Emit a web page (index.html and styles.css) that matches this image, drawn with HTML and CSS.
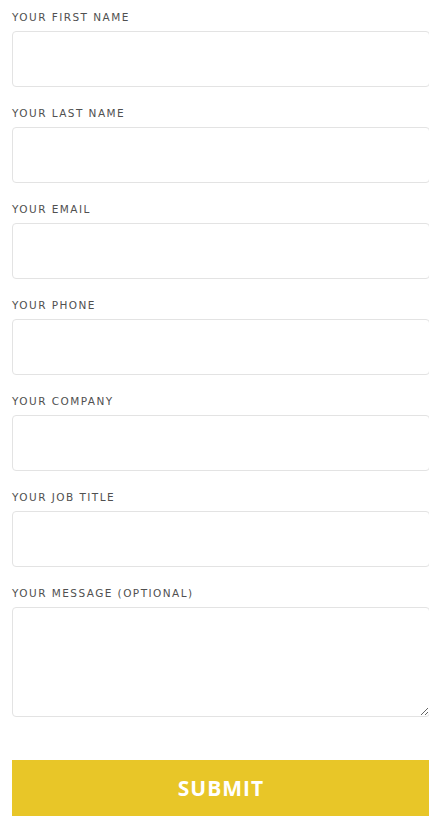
FILE: index.html
```html
<!DOCTYPE html>
<html>
<head>
<meta charset="utf-8">
<link rel="stylesheet" href="styles.css">
</head>
<body>
<form class="form">
  <div class="field"><label class="label">Your first name</label><input class="input" type="text"></div>
  <div class="field"><label class="label">Your last name</label><input class="input" type="text"></div>
  <div class="field"><label class="label">Your email</label><input class="input" type="text"></div>
  <div class="field"><label class="label">Your phone</label><input class="input" type="text"></div>
  <div class="field"><label class="label">Your company</label><input class="input" type="text"></div>
  <div class="field"><label class="label">Your job title</label><input class="input" type="text"></div>
  <div class="field"><label class="label">Your message (optional)</label><textarea class="textarea"></textarea></div>
  <button class="submit" type="button">SUBMIT</button>
</form>
</body>
</html>
```
FILE: styles.css
```css
html, body {
  margin: 0;
  padding: 0;
  background: #ffffff;
  overflow: hidden;
}
.form {
  padding: 8px 0 0 12px;
  display: flex;
  flex-direction: column;
  width: 418px;
}
.field {
  display: flex;
  flex-direction: column;
  margin-bottom: 17px;
}
.label {
  font-family: "DejaVu Sans", sans-serif;
  font-size: 10.5px;
  line-height: 16px;
  letter-spacing: 1.45px;
  text-transform: uppercase;
  color: #505050;
  padding-top: 1px;
  margin-bottom: 6px;
}
.input, .textarea {
  box-sizing: border-box;
  width: 418px;
  border: 1px solid #e3e3e3;
  border-radius: 4px;
  background: #fff;
  margin: 0;
}
.input {
  height: 56px;
}
.textarea {
  height: 110px;
  resize: vertical;
}
.submit {
  margin-top: 26px;
  height: 56px;
  width: 418px;
  border: none;
  background: #e8c628;
  color: #ffffff;
  font-family: "Open Sans", sans-serif;
  font-weight: 700;
  font-size: 21px;
  letter-spacing: 1px;
  padding: 0;
}
```
